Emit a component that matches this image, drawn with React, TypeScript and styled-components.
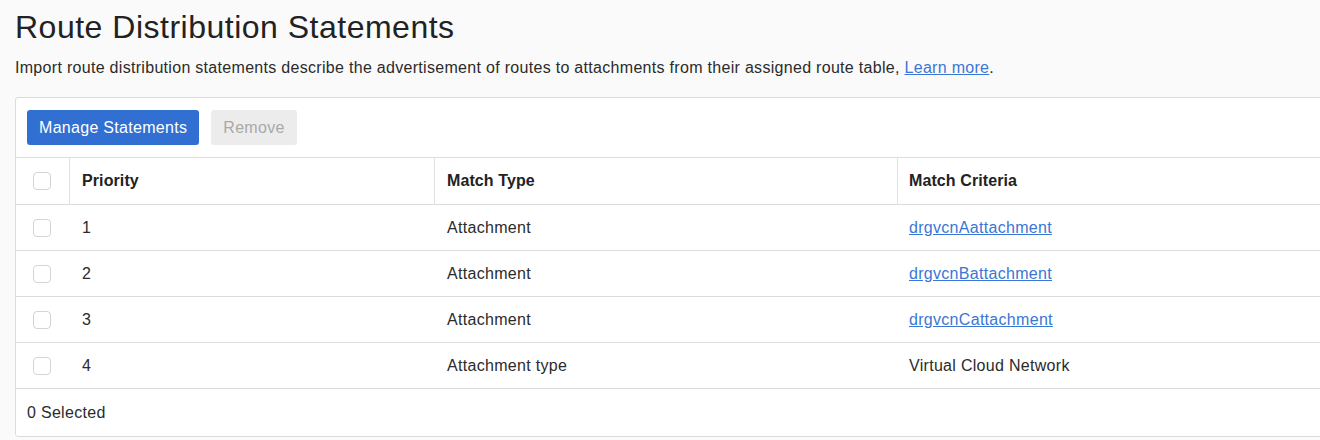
import React from 'react';
import styled, { createGlobalStyle } from 'styled-components';

const GlobalStyle = createGlobalStyle`
  html, body {
    margin: 0;
    padding: 0;
    background: #fafafa;
    overflow: hidden;
  }
  body {
    font-family: "Liberation Sans", Arial, sans-serif;
    color: #2b2b2b;
  }
`;

const Page = styled.div`
  padding: 0 0 0 15px;
  width: 1360px;
`;

const Title = styled.h1`
  margin: 0;
  padding-top: 8px;
  font-size: 32px;
  font-weight: 400;
  letter-spacing: 0.5px;
  line-height: 38px;
  color: #222;
`;

const Description = styled.p`
  margin: 12px 0 0;
  font-size: 16px;
  line-height: 20px;
  letter-spacing: 0.3px;
  color: #2b2b2b;
`;

const Link = styled.a`
  color: #3a76d6;
  text-decoration: underline;
  cursor: pointer;
`;

const Panel = styled.div`
  margin-top: 19px;
  background: #fff;
  border: 1px solid #dcdcdc;
  border-radius: 3px;
`;

const Toolbar = styled.div`
  display: flex;
  gap: 12px;
  padding: 12px 11px;
`;

const Button = styled.button<{ $primary?: boolean }>`
  height: 35px;
  padding: 0 12px;
  border: none;
  border-radius: 3px;
  font-family: inherit;
  font-size: 16px;
  letter-spacing: 0.3px;
  background: ${p => (p.$primary ? '#3170d2' : '#ececec')};
  color: ${p => (p.$primary ? '#fff' : '#a9a9a9')};
  cursor: ${p => (p.$primary ? 'pointer' : 'default')};
`;

const Table = styled.div`
  display: grid;
  grid-template-columns: 53px 365px 463px 1fr;
`;

const HeadCell = styled.div<{ $last?: boolean }>`
  height: 46px;
  display: flex;
  align-items: center;
  padding-left: ${p => (p.$last ? '11px' : '12px')};
  border-top: 1px solid #dcdcdc;
  border-bottom: 1px solid #dcdcdc;
  border-left: 1px solid #e2e2e2;
  font-weight: 700;
  font-size: 16px;
  letter-spacing: 0.1px;
  color: #222;
`;

const Cell = styled.div<{ $last?: boolean }>`
  height: 45px;
  display: flex;
  align-items: center;
  padding-left: ${p => (p.$last ? '12px' : '13px')};
  border-bottom: 1px solid #dcdcdc;
  font-size: 16px;
  letter-spacing: 0.3px;
  color: #2b2b2b;
`;

const CheckCell = styled.div<{ $head?: boolean }>`
  height: ${p => (p.$head ? '46px' : '45px')};
  display: flex;
  align-items: center;
  padding-left: 17px;
  border-bottom: 1px solid #dcdcdc;
  border-top: ${p => (p.$head ? '1px solid #dcdcdc' : 'none')};
`;

const Checkbox = styled.span`
  width: 18px;
  height: 18px;
  border: 1px solid #d4d4d4;
  border-radius: 4px;
  background: #fff;
  box-sizing: border-box;
`;

const Footer = styled.div`
  height: 47px;
  display: flex;
  align-items: center;
  padding-left: 11px;
  font-size: 16px;
  letter-spacing: 0.3px;
  color: #2b2b2b;
`;

type Row = { priority: number; type: string; criteria: string; link: boolean };

const rows: Row[] = [
  { priority: 1, type: 'Attachment', criteria: 'drgvcnAattachment', link: true },
  { priority: 2, type: 'Attachment', criteria: 'drgvcnBattachment', link: true },
  { priority: 3, type: 'Attachment', criteria: 'drgvcnCattachment', link: true },
  { priority: 4, type: 'Attachment type', criteria: 'Virtual Cloud Network', link: false },
];

export default function App() {
  return (
    <>
      <GlobalStyle />
      <Page>
        <Title>Route Distribution Statements</Title>
        <Description>
          Import route distribution statements describe the advertisement of routes to attachments from
          their assigned route table, <Link>Learn more</Link>.
        </Description>
        <Panel>
          <Toolbar>
            <Button $primary>Manage Statements</Button>
            <Button disabled>Remove</Button>
          </Toolbar>
          <Table>
            <CheckCell $head>
              <Checkbox />
            </CheckCell>
            <HeadCell>Priority</HeadCell>
            <HeadCell>Match Type</HeadCell>
            <HeadCell $last>Match Criteria</HeadCell>
            {rows.map(r => (
              <React.Fragment key={r.priority}>
                <CheckCell>
                  <Checkbox />
                </CheckCell>
                <Cell>{r.priority}</Cell>
                <Cell>{r.type}</Cell>
                <Cell $last>{r.link ? <Link>{r.criteria}</Link> : r.criteria}</Cell>
              </React.Fragment>
            ))}
          </Table>
          <Footer>0 Selected</Footer>
        </Panel>
      </Page>
    </>
  );
}
